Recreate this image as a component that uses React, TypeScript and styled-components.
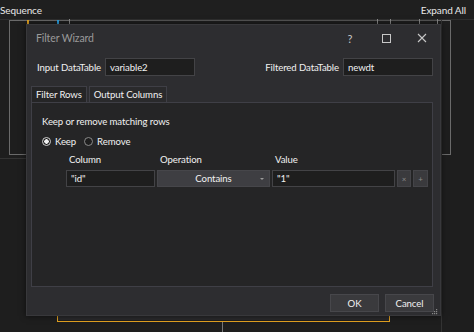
import styled, { createGlobalStyle } from "styled-components";

const GlobalStyle = createGlobalStyle`
  html, body {
    margin: 0;
    padding: 0;
    background: #1e1e1e;
    overflow: hidden;
  }
  body {
    font-family: "Lato", "Noto Sans", sans-serif;
    font-size: 9.6px;
    letter-spacing: -0.1px;
    color: #f1f1f1;
  }
`;

const Page = styled.div`
  position: relative;
  width: 474px;
  height: 332px;
  background: #1e1e1e;
  overflow: hidden;
`;

const Header = styled.div`
  height: 19px;
  display: flex;
  align-items: center;
  justify-content: space-between;
  padding: 0 8px 0 0;
  border-bottom: 1px solid #2e2e2e;
  background: #1f1f1f;
  font-size: 10px;
  color: #e8e8e8;
`;

/* pieces of the designer canvas behind the dialog */
const Line = styled.div<{ $color?: string }>`
  position: absolute;
  background: ${(p) => p.$color || "#6e6e6e"};
`;

const Box = styled.div<{ $color?: string }>`
  position: absolute;
  border: 1px solid ${(p) => p.$color || "#5a5a5a"};
`;

const Dialog = styled.div`
  position: absolute;
  left: 26px;
  top: 24px;
  width: 413px;
  height: 290px;
  background: #2d2d30;
  border: 1px solid #38383b;
  box-shadow: 0 0 6px rgba(0, 0, 0, 0.6);
  display: flex;
  flex-direction: column;
`;

const TitleBar = styled.div`
  height: 26px;
  display: flex;
  align-items: center;
  padding-left: 9px;
  color: #9a9a9a;
  font-size: 10.5px;
`;

const Title = styled.div`
  flex: 1;
`;

const TitleButton = styled.div`
  width: 36px;
  height: 26px;
  display: flex;
  align-items: center;
  justify-content: center;
  color: #c8c8c8;
  font-size: 11px;
`;

const Body = styled.div`
  flex: 1;
  display: flex;
  flex-direction: column;
  padding: 7px 7px 0 4px;
`;

const TableRow = styled.div`
  display: flex;
  align-items: center;
  justify-content: space-between;
  padding-left: 6px;
  height: 18px;
`;

const Field = styled.label`
  display: flex;
  align-items: center;
  gap: 4px;
  color: #f1f1f1;
`;

const TextBox = styled.div<{ $w: number }>`
  width: ${(p) => p.$w}px;
  height: 18px;
  box-sizing: border-box;
  background: #1e1e1e;
  border: 1px solid #434346;
  display: flex;
  align-items: center;
  padding-left: 4px;
  color: #f1f1f1;
`;

const Tabs = styled.div`
  display: flex;
  margin-top: 10px;
  height: 16px;
`;

const Tab = styled.div<{ $active?: boolean }>`
  height: 16px;
  box-sizing: border-box;
  padding: 0 4px;
  display: flex;
  align-items: center;
  margin-right: 2px;
  border: 1px solid #3f3f46;
  border-bottom: none;
  background: ${(p) => (p.$active ? "#252526" : "#2a2a2c")};
  color: #f1f1f1;
`;

const Panel = styled.div`
  height: 185px;
  box-sizing: border-box;
  background: #252526;
  border: 1px solid #3f3f46;
  padding: 12px 0 0 10px;
`;

const Caption = styled.div`
  height: 14px;
  line-height: 14px;
`;

const Radios = styled.div`
  display: flex;
  gap: 8px;
  margin-top: 5px;
  height: 14px;
  align-items: center;
`;

const Radio = styled.div<{ $on?: boolean }>`
  display: flex;
  align-items: center;
  gap: 4px;
  &::before {
    content: "";
    width: 7px;
    height: 7px;
    border-radius: 50%;
    border: 1px solid ${(p) => (p.$on ? "#d0d0d0" : "#8a8a8a")};
    background: ${(p) =>
      p.$on ? "radial-gradient(circle, #f1f1f1 0 2px, #1e1e1e 2.5px)" : "#1e1e1e"};
  }
`;

const Grid = styled.div`
  display: grid;
  grid-template-columns: 89px 113px 123px 14px 15px;
  column-gap: 2px;
  margin-left: 24px;
  margin-top: 5px;
`;

const ColHead = styled.div`
  height: 14px;
  line-height: 14px;
  padding-left: 3px;
  margin-bottom: 3px;
`;

const Combo = styled.div`
  height: 17px;
  box-sizing: border-box;
  background: #3e3e42;
  border: 1px solid #46464a;
  display: flex;
  align-items: center;
  justify-content: center;
  position: relative;
  &::after {
    content: "";
    position: absolute;
    right: 5px;
    top: 7px;
    border-left: 2.5px solid transparent;
    border-right: 2.5px solid transparent;
    border-top: 2.5px solid #9a9a9a;
  }
`;

const Cell = styled(TextBox)`
  width: auto;
  height: 17px;
`;

const SmallButton = styled.div`
  height: 17px;
  box-sizing: border-box;
  background: #3a3a3d;
  border: 1px solid #444448;
  display: flex;
  align-items: center;
  justify-content: center;
  color: #8a8a8a;
  font-size: 8px;
`;

const Footer = styled.div`
  display: flex;
  justify-content: flex-end;
  gap: 6px;
  padding: 7px 0 0 0;
  margin-right: -1px;
  position: relative;
`;

const Button = styled.div`
  width: 49px;
  height: 18px;
  box-sizing: border-box;
  background: #3a3a3d;
  border: 1px solid #47474b;
  display: flex;
  align-items: center;
  justify-content: center;
  color: #f1f1f1;
`;

const Grip = styled.svg`
  position: absolute;
  right: -4px;
  bottom: -3px;
`;

export default function App() {
  return (
    <Page>
      <GlobalStyle />
      <Header>
        <span>Sequence</span>
        <span>Expand All</span>
      </Header>

      <Box style={{ left: 9, top: 20, width: 440, height: 133 }} $color="#6a6a6a" />
      <Line style={{ left: 0, top: 158, width: 26, height: 1 }} $color="#333" />
      <Line style={{ left: 441, top: 20, width: 1, height: 312 }} $color="#333" />
      <Line style={{ left: 69, top: 20, width: 369, height: 1 }} $color="#555" />
      <Line style={{ left: 69, top: 19, width: 1, height: 6 }} $color="#8a8a8a" />
      <Line style={{ left: 377, top: 19, width: 1, height: 6 }} $color="#8a8a8a" />
      <Line style={{ left: 390, top: 19, width: 1, height: 6 }} $color="#8a8a8a" />
      <Line style={{ left: 419, top: 19, width: 1, height: 6 }} $color="#8a8a8a" />
      <Line style={{ left: 437, top: 19, width: 1, height: 6 }} $color="#8a8a8a" />
      <Line style={{ left: 27, top: 20, width: 2, height: 5 }} $color="#e0a020" />
      <Line style={{ left: 57, top: 20, width: 2, height: 5 }} $color="#2a9fe0" />
      <Line style={{ left: 57, top: 310, width: 1, height: 12 }} $color="#e0a020" />
      <Line style={{ left: 389, top: 310, width: 1, height: 12 }} $color="#e0a020" />
      <Line style={{ left: 57, top: 321, width: 333, height: 1 }} $color="#e0a020" />
      <Line style={{ left: 58, top: 315, width: 331, height: 5 }} $color="#2a2a2c" />
      <Line style={{ left: 222, top: 322, width: 1, height: 10 }} $color="#777" />

      <Dialog>
        <TitleBar>
          <Title>Filter Wizard</Title>
          <TitleButton>?</TitleButton>
          <TitleButton>
            <svg width="9" height="9" viewBox="0 0 9 9">
              <rect x="0.5" y="0.5" width="8" height="8" fill="none" stroke="#c8c8c8" />
            </svg>
          </TitleButton>
          <TitleButton>
            <svg width="10" height="10" viewBox="0 0 10 10">
              <path d="M1 1 L9 9 M9 1 L1 9" stroke="#c8c8c8" strokeWidth="1.1" />
            </svg>
          </TitleButton>
        </TitleBar>
        <Body>
          <TableRow>
            <Field>
              Input DataTable
              <TextBox $w={90}>variable2</TextBox>
            </Field>
            <Field>
              Filtered DataTable
              <TextBox $w={90}>newdt</TextBox>
            </Field>
          </TableRow>
          <Tabs>
            <Tab $active>Filter Rows</Tab>
            <Tab>Output Columns</Tab>
          </Tabs>
          <Panel>
            <Caption>Keep or remove matching rows</Caption>
            <Radios>
              <Radio $on>Keep</Radio>
              <Radio>Remove</Radio>
            </Radios>
            <Grid>
              <ColHead>Column</ColHead>
              <ColHead>Operation</ColHead>
              <ColHead>Value</ColHead>
              <span />
              <span />
              <Cell $w={89}>"id"</Cell>
              <Combo>Contains</Combo>
              <Cell $w={123}>"1"</Cell>
              <SmallButton>×</SmallButton>
              <SmallButton>+</SmallButton>
            </Grid>
          </Panel>
          <Footer>
            <Button>OK</Button>
            <Button>Cancel</Button>
            <Grip width="6" height="6" viewBox="0 0 6 6">
              <rect x="4" y="0" width="1.2" height="1.2" fill="#888" />
              <rect x="2" y="2" width="1.2" height="1.2" fill="#888" />
              <rect x="4" y="2" width="1.2" height="1.2" fill="#888" />
              <rect x="0" y="4" width="1.2" height="1.2" fill="#888" />
              <rect x="2" y="4" width="1.2" height="1.2" fill="#888" />
              <rect x="4" y="4" width="1.2" height="1.2" fill="#888" />
            </Grip>
          </Footer>
        </Body>
      </Dialog>
    </Page>
  );
}
